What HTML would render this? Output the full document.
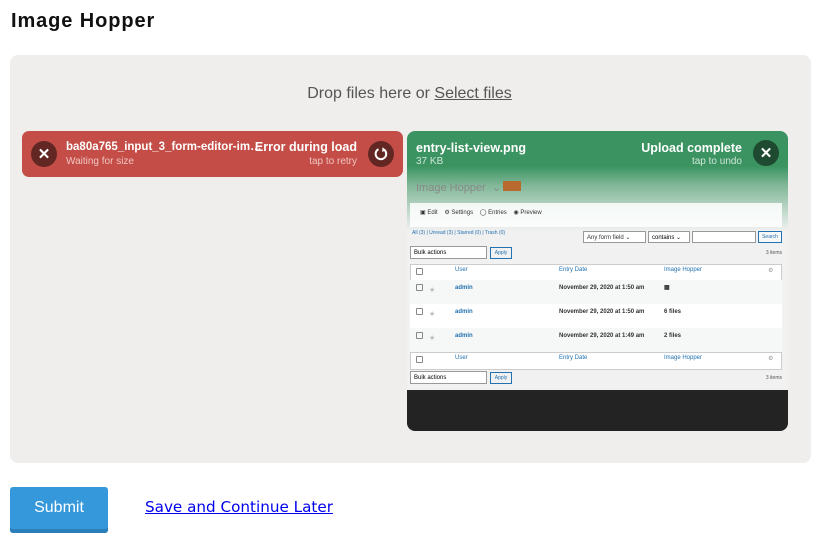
<!DOCTYPE html>
<html><head><style>
body{margin:0;width:819px;height:551px;background:#fff;font-family:"Liberation Sans",sans-serif;position:relative;overflow:hidden}
.abs{position:absolute}
h1{position:absolute;left:11px;top:10px;margin:0;font-size:20px;font-weight:bold;color:#111;letter-spacing:0.9px}
.box{left:10px;top:55px;width:801px;height:408px;background:#efeeed;border-radius:8px}
.drop{left:0;right:0;top:85px;text-align:center;font-size:16px;color:#555}
.red{left:22px;top:131px;width:381px;height:46px;background:#c44e47;border-radius:7px;color:#fff}
.circ{width:26px;height:26px;border-radius:50%;background:rgba(0,0,0,.5);display:flex;align-items:center;justify-content:center;color:#fff;font-size:15px;font-weight:bold}
.green{left:407px;top:131px;width:381px;height:300px;border-radius:8px;overflow:hidden;background:#f1f1f1}
.t{font-size:6px;color:#2271b1}
.row{position:absolute;left:3px;right:6px;background:#fff}
.cb{position:absolute;left:9px;width:5px;height:5px;border:1px solid #888;border-radius:1px}
</style></head><body>
<h1>Image Hopper</h1>
<div class="abs box"></div>
<div class="abs drop">Drop files here or <span style="text-decoration:underline">Select files</span></div>

<div class="abs red">
 <div class="abs circ" style="left:9px;top:10px">✕</div>
 <div class="abs" style="left:44px;top:10px;width:196px;font-size:11.5px;font-weight:bold;white-space:nowrap;overflow:hidden;text-overflow:ellipsis">ba80a765_input_3_form-editor-image-hopper.png</div>
 <div class="abs" style="left:44px;top:25px;font-size:10px;color:#f0c4c0">Waiting for size</div>
 <div class="abs" style="right:46px;top:9px;font-size:12.5px;font-weight:bold">Error during load</div>
 <div class="abs" style="right:46px;top:25px;font-size:10px;color:#f0c4c0">tap to retry</div>
 <div class="abs circ" style="right:9px;top:10px"><svg width="16" height="16" viewBox="0 0 16 16"><path d="M11.5 4A5.3 5.3 0 1 1 5.5 3.2" fill="none" stroke="#fff" stroke-width="2"/><path d="M9.5 1.2l3.5 2.8-3.8 2z" fill="#fff"/></svg></div>
</div>

<div class="abs green">
 <div class="abs" style="left:0;top:0;width:381px;height:100px;background:linear-gradient(#3a9360 0,#3a9360 35%,rgba(58,147,96,0.6) 55%,rgba(58,147,96,0) 100%)"></div>
 <div class="abs" style="left:9px;top:50px;font-size:11px;color:#888">Image Hopper &nbsp;⌄</div>
 <div class="abs" style="left:96px;top:50px;width:18px;height:10px;background:#b86a2e"></div>
 <div class="abs" style="left:3px;top:72px;width:372px;height:24px;background:rgba(255,255,255,.85)"></div>
 <div class="abs" style="left:13px;top:78px;font-size:6px;color:#333">▣ Edit &nbsp;&nbsp; ⚙ Settings &nbsp;&nbsp; ◯ Entries &nbsp;&nbsp; ◉ Preview</div>
 <div class="abs" style="left:5px;top:99px;font-size:5px;color:#2271b1">All (3) | Unread (3) | Starred (0) | Trash (0)</div>
 <div class="abs" style="left:176px;top:100px;width:63px;height:12px;background:#fff;border:1px solid #999;font-size:6px;color:#333;line-height:12px;padding-left:3px;box-sizing:border-box">Any form field ⌄</div>
 <div class="abs" style="left:241px;top:100px;width:42px;height:12px;background:#fff;border:1px solid #999;font-size:6px;line-height:12px;padding-left:3px;box-sizing:border-box">contains ⌄</div>
 <div class="abs" style="left:285px;top:100px;width:64px;height:12px;background:#fff;border:1px solid #999;box-sizing:border-box"></div>
 <div class="abs" style="left:351px;top:100px;width:24px;height:12px;background:#f6f7f7;border:1px solid #2271b1;box-sizing:border-box;font-size:5px;color:#2271b1;text-align:center;line-height:11px">Search</div>
 <div class="abs" style="left:3px;top:115px;width:77px;height:13px;background:#fff;border:1px solid #999;box-sizing:border-box;font-size:6px;line-height:12px;padding-left:3px">Bulk actions</div>
 <div class="abs" style="left:83px;top:116px;width:22px;height:12px;border:1px solid #2271b1;box-sizing:border-box;font-size:5px;color:#2271b1;text-align:center;line-height:11px">Apply</div>
 <div class="abs" style="right:6px;top:119px;font-size:5px;color:#555">3 items</div>
 <div class="row" style="top:133px;height:16px;border:1px solid #ccc"></div>
 <div class="row" style="top:149px;height:24px;background:#f6f7f7"></div>
 <div class="row" style="top:173px;height:24px"></div>
 <div class="row" style="top:197px;height:24px;background:#f6f7f7"></div>
 <div class="row" style="top:221px;height:16px;border:1px solid #ccc"></div>
 <div class="cb" style="top:137px"></div><div class="cb" style="top:153px"></div><div class="cb" style="top:177px"></div><div class="cb" style="top:201px"></div><div class="cb" style="top:225px"></div>
 <div class="abs" style="left:22px;top:148px;font-size:7px;color:#bbb;line-height:24px">★<br>★<br>★</div>
 <div class="abs t" style="left:48px;top:136px">User</div><div class="abs t" style="left:152px;top:136px">Entry Date</div><div class="abs t" style="left:257px;top:136px">Image Hopper</div><div class="abs" style="left:361px;top:136px;font-size:6px;color:#999">⚙</div>
 <div class="abs t" style="left:48px;top:224px">User</div><div class="abs t" style="left:152px;top:224px">Entry Date</div><div class="abs t" style="left:257px;top:224px">Image Hopper</div><div class="abs" style="left:361px;top:224px;font-size:6px;color:#999">⚙</div>
 <div class="abs" style="left:48px;top:145px;font-size:6px;font-weight:bold;color:#2271b1;line-height:24px">admin<br>admin<br>admin</div>
 <div class="abs" style="left:152px;top:145px;font-size:6px;font-weight:bold;color:#333;line-height:24px">November 29, 2020 at 1:50 am<br>November 29, 2020 at 1:50 am<br>November 29, 2020 at 1:49 am</div>
 <div class="abs" style="left:257px;top:145px;font-size:6px;font-weight:bold;color:#333;line-height:24px">▦<br>6 files<br>2 files</div>
 <div class="abs" style="left:3px;top:240px;width:77px;height:13px;background:#fff;border:1px solid #999;box-sizing:border-box;font-size:6px;line-height:12px;padding-left:3px">Bulk actions</div>
 <div class="abs" style="left:83px;top:241px;width:22px;height:12px;border:1px solid #2271b1;box-sizing:border-box;font-size:5px;color:#2271b1;text-align:center;line-height:11px">Apply</div>
 <div class="abs" style="right:6px;top:244px;font-size:5px;color:#555">3 items</div>
 <div class="abs" style="left:0;top:259px;width:381px;height:41px;background:#232323"></div>
 <div class="abs" style="left:9px;top:10px;font-size:12.5px;font-weight:bold;color:#fff">entry-list-view.png</div>
 <div class="abs" style="left:9px;top:25px;font-size:10px;color:#cfe6d8">37 KB</div>
 <div class="abs" style="right:46px;top:10px;font-size:12.5px;font-weight:bold;color:#fff">Upload complete</div>
 <div class="abs" style="right:46px;top:25px;font-size:10px;color:#cfe6d8">tap to undo</div>
 <div class="abs circ" style="right:9px;top:9px;width:26px;height:26px;background:#1d4a30">✕</div>
</div>

<div class="abs" style="left:10px;top:487px;width:98px;height:46px;background:#3498db;border-radius:3px;box-shadow:inset 0 -4px 0 #2a7fb8;color:#fff;font-size:16px;text-align:center;line-height:42px">Submit</div>
<div class="abs" style="left:145px;top:498px;font-family:'DejaVu Sans',sans-serif;font-size:15.2px;color:#00e;text-decoration:underline">Save and Continue Later</div>
</body></html>
